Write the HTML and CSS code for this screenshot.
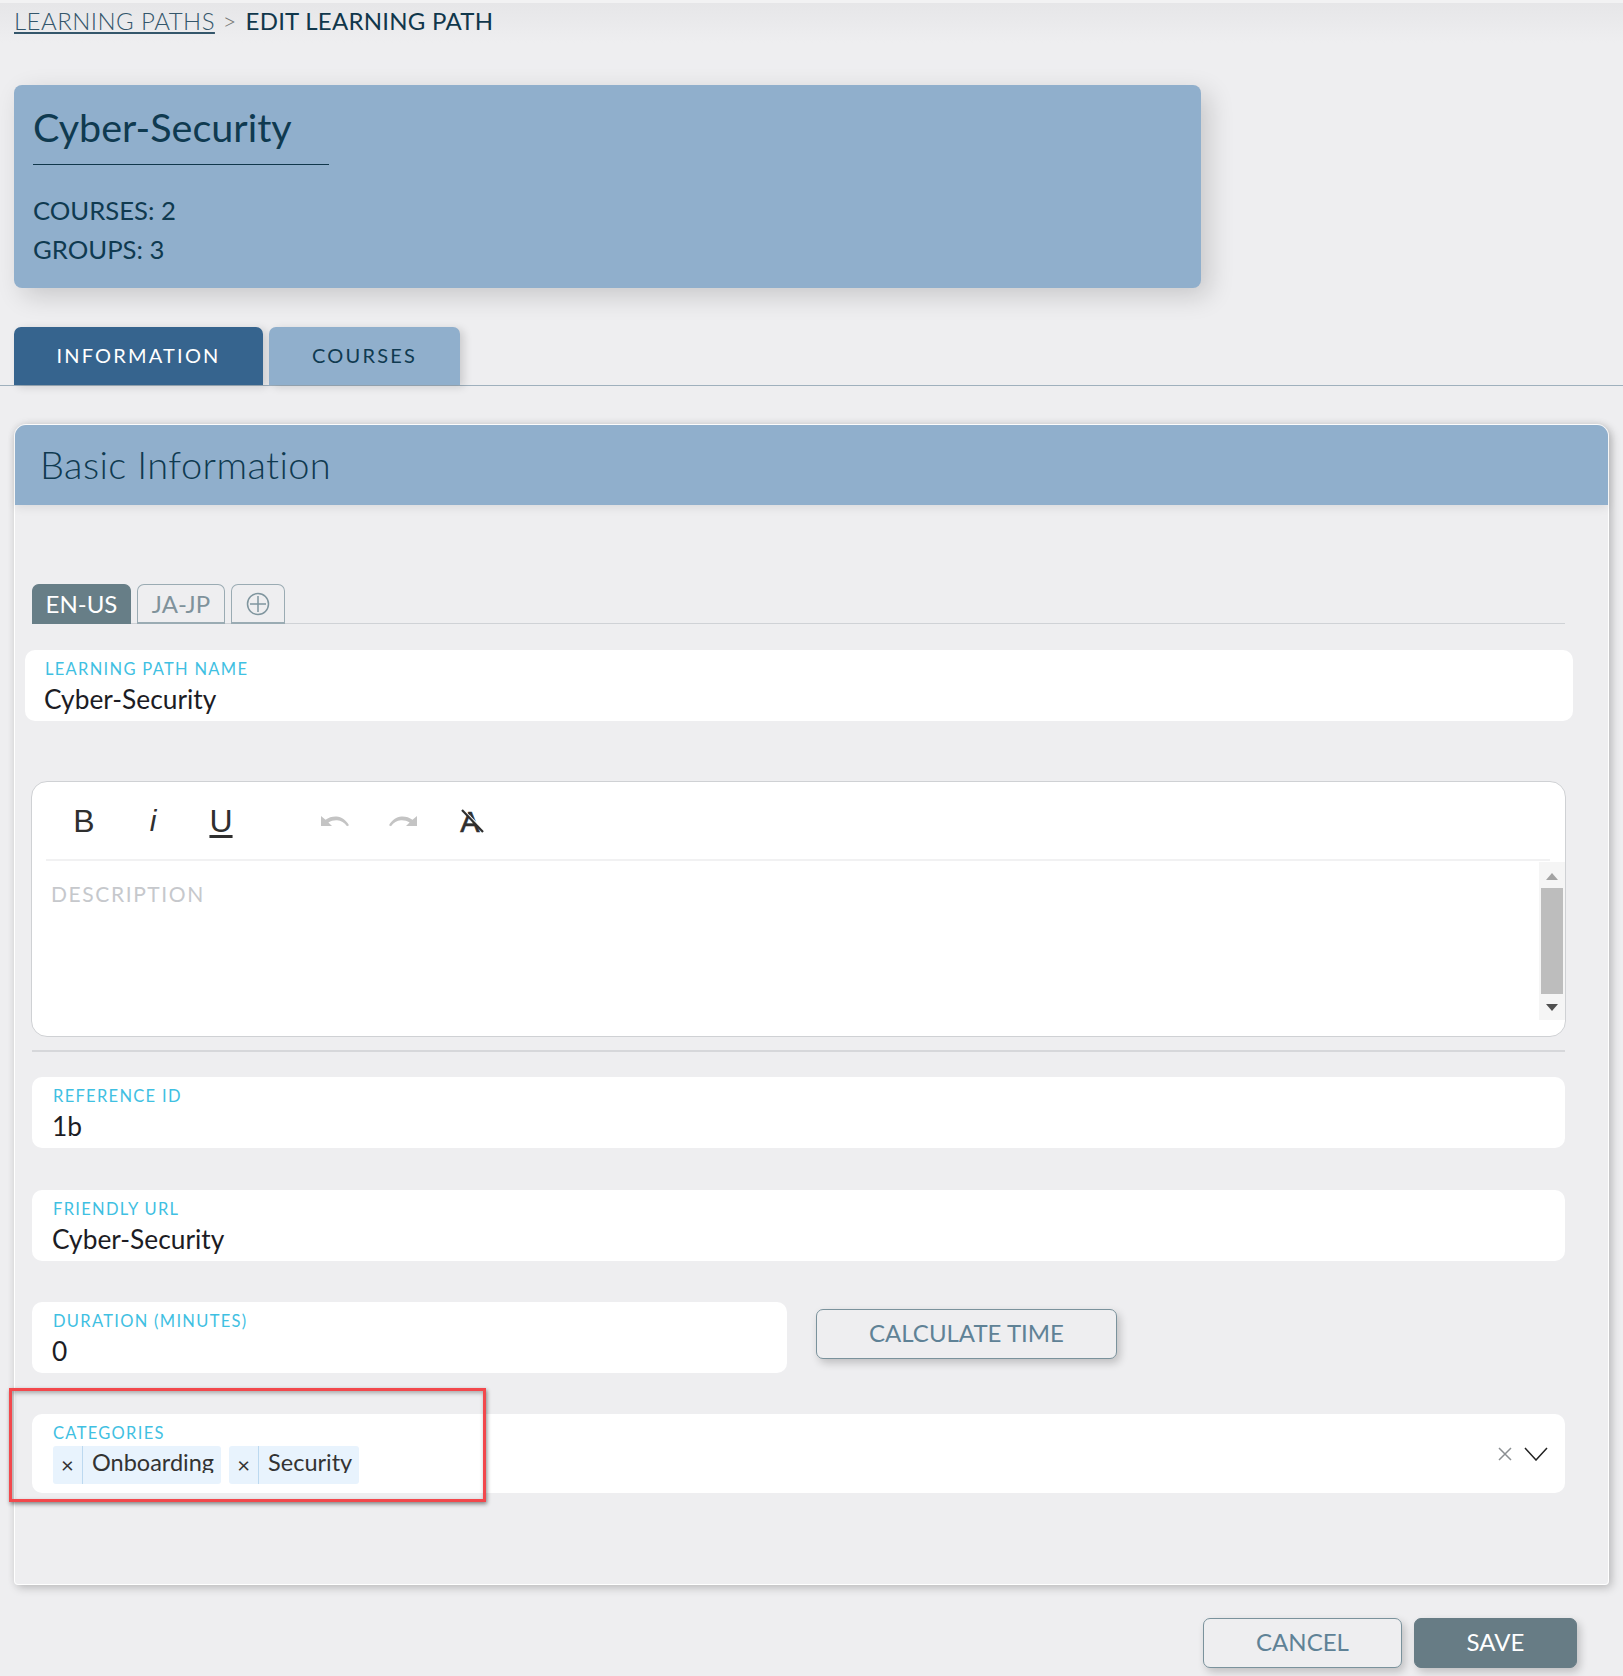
FILE: index.html
```html
<!DOCTYPE html>
<html lang="en">
    <head>
        <meta charset="utf-8" />
        <title>Edit Learning Path</title>
        <link rel="stylesheet" href="styles.css">
    </head>

    <body>
        <nav class="breadcrumb">
            <a class="crumb-link" href="#">LEARNING PATHS</a>
            <span class="crumb-sep">&gt;</span>
            <span class="crumb-current">EDIT LEARNING PATH</span>
        </nav>

        <section class="summary-card">
            <h1 class="summary-title">Cyber-Security</h1>
            <p class="summary-line">COURSES: 2</p>
            <p class="summary-line">GROUPS: 3</p>
        </section>

        <div class="tabs">
            <div class="tab tab-active">INFORMATION</div>
            <div class="tab">COURSES</div>
        </div>

        <section class="panel">
            <h2 class="panel-header">Basic Information</h2>
            <div class="panel-body">
                <div class="lang-tabs">
                    <div class="lang-tab lang-active">EN-US</div>
                    <div class="lang-tab">JA-JP</div>
                    <div class="lang-tab lang-add">
                        <svg width="24" height="24" viewBox="0 0 24 24" fill="none" stroke="#7f959e" stroke-width="1.5">
                            <circle cx="12" cy="12" r="10.5" />
                            <path d="M12 4v16M4 12h16" />
                        </svg>
                    </div>
                </div>

                <div class="field field-wide">
                    <label class="field-label">LEARNING PATH NAME</label>
                    <div class="field-value">Cyber-Security</div>
                </div>

                <div class="editor">
                    <div class="toolbar">
                        <span class="tool tool-b">B</span>
                        <span class="tool tool-i">i</span>
                        <span class="tool tool-u">U</span>
                        <span class="tool tool-gap">
                            <svg width="30" height="16" viewBox="0 0 30 16" fill="#c4c4c4">
                                <path d="M1 3v10h11l-3.6-3.6C11 7.8 14 7 17 7.2c4 .3 7.500 2.300 10 6l2-1C26 7 21.500 3.800 16.500 3.500 12.500 3.300 8.500 4.500 5.500 6.800z" />
                            </svg>
                        </span>
                        <span class="tool">
                            <svg width="30" height="16" viewBox="0 0 30 16" fill="#c4c4c4">
                                <path d="M29 3v10H18l3.600-3.600C19 7.800 16 7 13 7.200c-4 .3-7.500 2.300-10 6l-2-1C4 7 8.500 3.800 13.500 3.500c4-.2 8 1 11 3.300z" />
                            </svg>
                        </span>
                        <span class="tool">
                            <svg class="clear-icon" width="30" height="30" viewBox="0 0 30 30">
                                <text class="clear-letter" x="14" y="26" text-anchor="middle">A</text>
                                <path d="M6 6l20 20" stroke="#fff" stroke-width="2" transform="translate(1.500 -1.500)" />
                                <path d="M6 4l21 22" stroke="#2f2f2f" stroke-width="2.200" />
                            </svg>
                        </span>
                    </div>
                    <div class="editor-area">
                        <div class="editor-text">DESCRIPTION</div>
                        <div class="scrollbar">
                            <span class="arrow-up"></span>
                            <span class="scroll-thumb"></span>
                            <span class="arrow-down"></span>
                        </div>
                    </div>
                </div>

                <hr class="divider">

                <div class="field">
                    <label class="field-label">REFERENCE ID</label>
                    <div class="field-value">1b</div>
                </div>

                <div class="field field-next">
                    <label class="field-label">FRIENDLY URL</label>
                    <div class="field-value">Cyber-Security</div>
                </div>

                <div class="duration-row">
                    <div class="field field-duration">
                        <label class="field-label">DURATION (MINUTES)</label>
                        <div class="field-value">0</div>
                    </div>
                    <button class="btn btn-calc">CALCULATE TIME</button>
                </div>

                <div class="field field-categories">
                    <div class="categories-main">
                        <label class="field-label">CATEGORIES</label>
                        <div class="tag-list">
                            <div class="tag"><span class="tag-x">×</span><span class="tag-text">Onboarding</span></div>
                            <div class="tag"><span class="tag-x">×</span><span class="tag-text">Security</span></div>
                        </div>
                    </div>
                    <div class="select-icons">
                        <svg width="14" height="14" viewBox="0 0 14 14" fill="none" stroke="#8b8f92" stroke-width="1.500">
                            <path d="M1 1l12 12M13 1L1 13" />
                        </svg>
                        <svg width="24" height="14" viewBox="0 0 24 14" fill="none" stroke="#222" stroke-width="1.500">
                            <path d="M1 1l11 12L23 1" />
                        </svg>
                    </div>
                </div>
            </div>
        </section>

        <div class="actions">
            <button class="btn btn-cancel">CANCEL</button>
            <button class="btn btn-save">SAVE</button>
        </div>

        <div class="highlight-box"></div>
    </body>
</html>
```

FILE: styles.css
```css
* {
    box-sizing: border-box;
}
body {
    margin: 0;
    height: 1676px;
    overflow: hidden;
    position: relative;
    background: #eeeef0;
    font-family: "Lato", "Liberation Sans", sans-serif;
    color: #0f3a50;
}

/* breadcrumb */
.breadcrumb {
    height: 85px;
    padding: 3px 0 0 14px;
    font-size: 24px;
    line-height: 29px;
    letter-spacing: 0.45px;
    background: linear-gradient(#e6e6e8, #eeeef0 40px);
    border-top: 3px solid #f2f2f3;
}
.crumb-link {
    color: #34566b;
    font-weight: 300;
    text-decoration: underline;
    text-underline-offset: 2px;
}
.crumb-sep {
    color: #777;
    font-weight: 300;
    margin: 0 2px 0 1px;
}
.crumb-current {
    color: #10374b;
    letter-spacing: 0.25px;
}

/* summary card */
.summary-card {
    width: 1187px;
    height: 203px;
    margin-left: 14px;
    padding: 16px 19px;
    background: #90afcc;
    border-radius: 8px;
    box-shadow: 8px 8px 26px rgba(0, 0, 0, 0.16);
}
.summary-title {
    width: 296px;
    height: 64px;
    margin: 0 0 26px;
    padding-top: 2px;
    font-size: 39.5px;
    line-height: 48px;
    font-weight: 400;
    border-bottom: 1px solid #10374b;
}
.summary-line {
    margin: 0;
    font-size: 25.700px;
    line-height: 39px;
}

/* main tabs */
.tabs {
    display: flex;
    gap: 6px;
    height: 59px;
    margin-top: 39px;
    padding-left: 14px;
    border-bottom: 1px solid #9fb0bd;
}
.tab {
    width: 191px;
    height: 58px;
    text-align: center;
    font-size: 20px;
    line-height: 56px;
    letter-spacing: 2.200px;
    background: #90afcc;
    border-radius: 7px 7px 0 0;
    box-shadow: 4px 2px 8px rgba(0, 0, 0, 0.14);
}
.tab-active {
    width: 249px;
    color: #fff;
    background: #36648e;
}

/* panel */
.panel {
    width: 1595px;
    height: 1161px;
    margin: 38px 0 0 14px;
    border: 1px solid #fff;
    border-radius: 12px 12px 4px 4px;
    box-shadow: 3px 3px 10px rgba(0, 0, 0, 0.2), 0 -1px 8px rgba(0, 0, 0, 0.06);
}
.panel-header {
    height: 80px;
    margin: 0;
    padding-left: 25px;
    font-size: 38px;
    line-height: 78px;
    font-weight: 300;
    letter-spacing: 0.4px;
    background: #90afcc;
    border-radius: 11px 11px 0 0;
    box-shadow: 0 3px 10px rgba(0, 0, 0, 0.08);
}
.panel-body {
    padding: 79px 43px 0 17px;
}

/* language tabs */
.lang-tabs {
    display: flex;
    gap: 6px;
    height: 40px;
    border-bottom: 1px solid #cfd2d6;
}
.lang-tab {
    width: 88px;
    height: 40px;
    border: 1px solid #9aabb3;
    border-bottom-width: 2px;
    border-radius: 7px 7px 0 0;
    color: #7f929b;
    text-align: center;
    font-size: 24px;
    line-height: 37px;
}
.lang-active {
    width: 99px;
    color: #fff;
    background: #677e87;
    border-color: #677e87;
}
.lang-add {
    width: 54px;
    padding-top: 7px;
    line-height: 0;
}

/* form fields */
.field {
    height: 71px;
    margin-top: 25px;
    padding: 8px 18px 0 21px;
    background: #fff;
    border-radius: 10px;
}
.field-wide {
    margin: 26px -8px 0 -7px;
    padding-left: 20px;
}
.field-next {
    margin-top: 42px;
}
.field-label {
    display: block;
    color: #3fc0e2;
    font-size: 16.500px;
    line-height: 22px;
    letter-spacing: 1.300px;
}
.field-value {
    margin: 2px 0 0 -1px;
    color: #1c1c24;
    font-size: 26.300px;
    line-height: 35px;
}

/* rich text editor */
.editor {
    height: 256px;
    margin: 60px -1px 0 -1px;
    background: #fff;
    border: 1px solid #cfd1d4;
    border-radius: 16px;
    overflow: hidden;
}
.toolbar {
    display: flex;
    align-items: center;
    height: 79px;
    margin: 0 15px 0 14px;
    padding-left: 21px;
    border-bottom: 2px solid #f1f1f2;
}
.tool {
    width: 68px;
    display: flex;
    justify-content: center;
    color: #2f2f2f;
    font-family: "Liberation Sans", sans-serif;
    font-size: 32px;
    line-height: 34px;
}
.tool-b {
    width: 34px;
}
.tool-i {
    margin-left: 18px;
    font-style: italic;
    font-size: 30px;
    width: 68px;
}
.tool-u {
    width: 68px;
    text-decoration: underline;
    text-decoration-thickness: 3px;
    text-underline-offset: 3px;
}
.tool-gap {
    margin-left: 46px;
}
.clear-icon {
    overflow: visible;
}
.clear-letter {
    font-family: "Liberation Sans", sans-serif;
    font-weight: 400;
    font-size: 29px;
    fill: #2f2f2f;
    stroke: #2f2f2f;
    stroke-width: 0.6px;
}
.editor-area {
    display: flex;
    justify-content: space-between;
    height: 158px;
    margin-top: 1px;
}
.editor-text {
    padding: 19px 0 0 19px;
    color: #c6c8cc;
    font-size: 21px;
    line-height: 26px;
    letter-spacing: 1.600px;
    font-weight: 400;
}
.scrollbar {
    display: flex;
    flex-direction: column;
    align-items: center;
    width: 26px;
    background: #f5f5f5;
    padding: 11px 2px 0;
}
.scroll-thumb {
    width: 100%;
    height: 106px;
    margin: 8px 0 10px;
    background: #bdbdbd;
}
.arrow-up,
.arrow-down {
    width: 0;
    height: 0;
    border-left: 6px solid transparent;
    border-right: 6px solid transparent;
}
.arrow-up {
    border-bottom: 7px solid #a3a3a3;
}
.arrow-down {
    border-top: 7px solid #505050;
}
.divider {
    height: 2px;
    margin: 13px 0 0;
    border: 0;
    background: #d6d7da;
}

/* duration row */
.duration-row {
    display: flex;
    align-items: flex-start;
    gap: 29px;
    margin-top: 41px;
}
.field-duration {
    width: 755px;
    margin-top: 0;
}

/* buttons */
.btn {
    height: 50px;
    padding: 0 0 3px;
    font-family: inherit;
    font-size: 24px;
    color: #5f8296;
    background: #eeeef0;
    border: 1px solid #7a929c;
    border-radius: 7px;
    box-shadow: 3px 4px 8px rgba(0, 0, 0, 0.2);
}
.btn-calc {
    width: 301px;
    margin-top: 7px;
}
.actions {
    display: flex;
    justify-content: flex-end;
    gap: 12px;
    margin-top: 33px;
    padding-right: 46px;
}
.btn-cancel {
    width: 199px;
}
.btn-save {
    width: 163px;
    color: #fff;
    background: #677c85;
    border-color: #677c85;
}

/* categories */
.field-categories {
    display: flex;
    justify-content: space-between;
    height: 79px;
    margin-top: 41px;
    padding: 8px 17px 0 21px;
}
.tag-list {
    display: flex;
    gap: 8px;
    margin-top: 2px;
}
.tag {
    display: flex;
    height: 38px;
    background: #e8f3fd;
    border-radius: 3px;
    color: #333;
}
.tag-x {
    width: 30px;
    border-right: 1px solid #bcd9f0;
    text-align: center;
    font-size: 22px;
    line-height: 38px;
}
.tag-text {
    height: 27px;
    overflow: hidden;
    padding: 0 7px 0 9px;
    font-size: 23.500px;
    line-height: 32px;
}
.select-icons {
    display: flex;
    align-items: center;
    gap: 12px;
    height: 64px;
}

/* red annotation around the categories field */
.highlight-box {
    position: absolute;
    left: 9px;
    top: 1388px;
    width: 477px;
    height: 114px;
    border: 3px solid #f2484c;
    box-shadow: 1px 2px 4px rgba(0, 0, 0, 0.45), inset 1px 2px 4px rgba(0, 0, 0, 0.3);
}
```
